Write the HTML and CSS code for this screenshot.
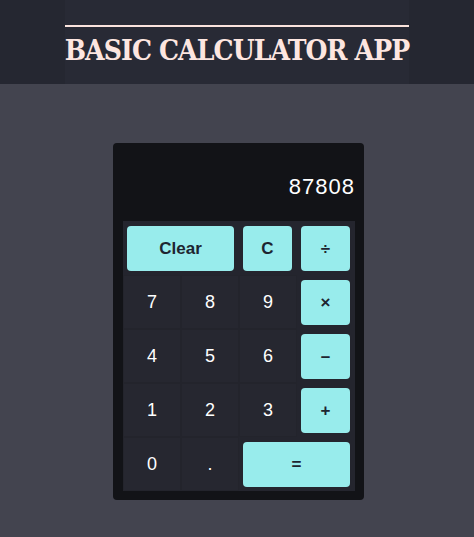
FILE: index.html
```html
<!DOCTYPE html>
<html lang="en">
<head>
    <meta charset="UTF-8">
    <meta name="viewport" content="width=device-width, initial-scale=1.0">
    <title>Basic Calculator App</title>
    <link rel="stylesheet" href="styles.css">
</head>
<body>
    <header class="top">
        <div class="title-wrap">
            <h1>BASIC CALCULATOR APP</h1>
        </div>
    </header>
    <main class="page">
        <div class="calculator">
            <div class="display" id="display">87808</div>
            <div class="keys">
                <button class="key op wide">Clear</button>
                <button class="key op">C</button>
                <button class="key op">÷</button>
                <button class="key">7</button>
                <button class="key">8</button>
                <button class="key">9</button>
                <button class="key op">×</button>
                <button class="key">4</button>
                <button class="key">5</button>
                <button class="key">6</button>
                <button class="key op">–</button>
                <button class="key">1</button>
                <button class="key">2</button>
                <button class="key">3</button>
                <button class="key op">+</button>
                <button class="key">0</button>
                <button class="key">.</button>
                <button class="key op wide">=</button>
            </div>
        </div>
    </main>
</body>
</html>
```

FILE: styles.css
```css
html, body {
    margin: 0;
    padding: 0;
    height: 100%;
}
body {
    font-family: "Liberation Sans", Arial, sans-serif;
    background-color: #43444f;
}
.top {
    background-color: #252731;
    height: 84px;
    display: flex;
    justify-content: center;
}
.title-wrap {
    background-color: #282a35;
    padding-top: 25px;
}
h1 {
    margin: 0;
    border-top: 2px solid #fbe3dd;
    padding-top: 8px;
    font-family: "DejaVu Serif", "Liberation Serif", serif;
    font-stretch: condensed;
    font-weight: bold;
    font-size: 28px;
    letter-spacing: -0.9px;
    color: #fde6e0;
    line-height: 32px;
}
.page {
    display: flex;
    justify-content: center;
    padding-top: 59px;
    padding-left: 3px;
}
.calculator {
    background-color: #121317;
    border-radius: 4px;
    width: 232px;
    padding: 0 9px 9px 10px;
}
.display {
    height: 78px;
    color: #ffffff;
    font-size: 22px;
    letter-spacing: 1px;
    text-align: right;
    line-height: 88px;
}
.keys {
    background-color: #24252e;
    display: grid;
    grid-template-columns: repeat(4, 58px);
    grid-auto-rows: 54px;
}
.key {
    font-family: "Liberation Sans", Arial, sans-serif;
    background-color: #262730;
    border: 1px solid #23242c;
    color: #ffffff;
    font-size: 18px;
    cursor: pointer;
    padding: 0;
}
.key.op {
    background-color: #98ecec;
    color: #1e2530;
    font-weight: bold;
    font-size: 17px;
    border: none;
    border-radius: 4px;
    margin: 5px 5px 4px 4px;
}
.key.wide {
    grid-column: span 2;
}
```
